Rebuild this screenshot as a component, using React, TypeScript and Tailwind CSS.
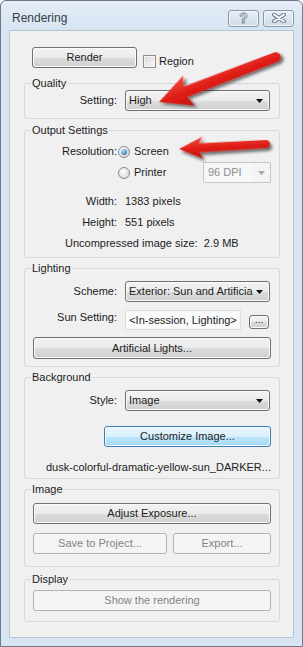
import type { ReactNode } from 'react'

// Win7-ish control faces
const face =
  'bg-[linear-gradient(#f3f3f3_0%,#ebebeb_50%,#dddddd_51%,#cfcfcf_100%)] border border-[#707070] rounded-[3px] shadow-[inset_0_0_0_1px_#fbfbfb]'
const blueFace =
  'bg-[linear-gradient(#eaf6fd_0%,#d9f0fc_50%,#bee6fd_51%,#a7d9f5_100%)] border border-[#3c7fb1] rounded-[3px] shadow-[inset_0_0_0_1px_#f4fbfe]'
const offFace = 'bg-[#f4f4f4] border border-[#adb2b5] rounded-[3px] text-[#838383]'

function Button({ children, className = '', kind = 'normal' }: {
  children: ReactNode; className?: string; kind?: 'normal' | 'blue' | 'off'
}) {
  const look = kind === 'blue' ? blueFace : kind === 'off' ? offFace : face
  return (
    <div className={`flex items-center justify-center h-[21px] ${look} ${className}`}>
      {children}
    </div>
  )
}

function Select({ value, className = '', disabled = false }: { value: string; className?: string; disabled?: boolean }) {
  if (disabled) {
    return (
      <div className={`h-[21px] flex items-center border border-[#c6c6c6] rounded-[2px] bg-[#f4f4f4] text-[#8d8d8d] ${className}`}>
        <span className="flex-1 h-full flex items-center pl-[4px] bg-[#f7f7f7]">{value}</span>
        <span className="w-[17px] flex justify-center">
          <svg width="7" height="4" viewBox="0 0 7 4"><path d="M0 0H7L3.5 4Z" fill="#a7a7a7" /></svg>
        </span>
      </div>
    )
  }
  return (
    <div className={`h-[21px] flex items-center pl-[3px] pr-[6px] ${face} ${className}`}>
      <span className="flex-1 whitespace-nowrap">{value}</span>
      <svg className="ml-[3px] shrink-0" width="7" height="4" viewBox="0 0 7 4"><path d="M0 0H7L3.5 4Z" fill="#111" /></svg>
    </div>
  )
}

function Radio({ checked }: { checked?: boolean }) {
  return (
    <span className="w-[12px] h-[12px] rounded-full border border-[#8b8b8b] bg-[radial-gradient(circle_at_40%_35%,#ffffff,#cfcfcf)] flex items-center justify-center shrink-0">
      {checked && (
        <span className="w-[6px] h-[6px] rounded-full bg-[radial-gradient(circle_at_35%_30%,#a9e4ff,#17588f)]" />
      )}
    </span>
  )
}

function Group({ title, className = '', children }: { title: string; className?: string; children: ReactNode }) {
  return (
    <fieldset className={`border border-[#d5d9dd] rounded-[3px] px-[8px] ${className}`}>
      <legend className="-ml-[2px] px-[1px] leading-[14px]">{title}</legend>
      {children}
    </fieldset>
  )
}

function Label({ children }: { children: ReactNode }) {
  return <span className="w-[84px] shrink-0 text-right">{children}</span>
}

function Arrow({ x, y, angle, len, head, half, shaft }: {
  x: number; y: number; angle: number; len: number; head: number; half: number; shaft: number
}) {
  const d = `M0 0 L${head} ${-half} L${head - 4} ${-shaft} L${len} ${-shaft + 0.5} A${shaft - 0.5} ${shaft - 0.5} 0 0 1 ${len} ${shaft - 0.5} L${head - 4} ${shaft} L${head} ${half} Z`
  return (
    <g transform={`translate(${x} ${y}) rotate(${angle})`} filter="url(#shadow)">
      <path d={d} fill="url(#red)" />
    </g>
  )
}

export default function App() {
  return (
    <div className="relative w-[303px] h-[647px] flex flex-col bg-[#d7e4f2] border border-[#6c7888] rounded-t-[6px] font-['Liberation_Sans',Arial,sans-serif] text-[11px] text-[#1c1c1c]">
      {/* Title bar */}
      <div className="h-[29px] shrink-0 flex items-center pl-[11px] pr-[8px] pt-[5px] bg-[linear-gradient(#e4edf7,#d7e4f2)] rounded-t-[6px]">
        <span className="text-[12px] text-[#363d47]">Rendering</span>
        <div className="ml-auto flex gap-[4px]">
          <div className="w-[31px] h-[17px] rounded-[3px] border border-[#8798ad] bg-[linear-gradient(#e9eff6,#cfdbe8)] shadow-[inset_0_0_0_1px_#f1f5fa] flex items-center justify-center">
            <span className="text-[14px] font-bold leading-none text-white [-webkit-text-stroke:0.8px_#6f7f92]">?</span>
          </div>
          <div className="w-[31px] h-[17px] rounded-[3px] border border-[#8798ad] bg-[linear-gradient(#e9eff6,#cfdbe8)] shadow-[inset_0_0_0_1px_#f1f5fa] flex items-center justify-center">
            <svg width="14" height="10" viewBox="0 0 14 10">
              <path d="M2 1.5L12 8.5M12 1.5L2 8.5" stroke="#6f7f92" strokeWidth="4" strokeLinecap="round" />
              <path d="M2 1.5L12 8.5M12 1.5L2 8.5" stroke="#ffffff" strokeWidth="2" strokeLinecap="round" />
            </svg>
          </div>
        </div>
      </div>

      {/* Client area */}
      <div className="mx-[8px] h-[608px] shrink-0 bg-[#f0f0f0] border border-[#b6c4d4] pl-[14px] pr-[13px] pt-[16px] flex flex-col">
        <div className="flex items-center ml-[8px] h-[21px]">
          <Button className="w-[105px]">Render</Button>
          <div className="ml-[6px] mt-[7px] flex items-center gap-[3px]">
            <span className="w-[13px] h-[13px] border border-[#8f8f8f] bg-[linear-gradient(135deg,#d6d6d6,#fbfbfb)] shadow-[inset_0_0_0_1px_#f4f4f4]" />
            <span>Region</span>
          </div>
        </div>

        <Group title="Quality" className="mt-[8px] pb-[7px]">
          <div className="flex items-center">
            <Label>Setting:</Label>
            <Select value="High" className="ml-[8px] w-[145px]" />
          </div>
        </Group>

        <Group title="Output Settings" className="mt-[4px] pt-[4px] pb-[3px]">
          <div className="flex items-center h-[21px]">
            <Label>Resolution:</Label>
            <span className="ml-[1px]"><Radio checked /></span>
            <span className="ml-[4px]">Screen</span>
          </div>
          <div className="flex items-center h-[21px]">
            <span className="ml-[85px]"><Radio /></span>
            <span className="ml-[4px]">Printer</span>
            <Select value="96 DPI" disabled className="ml-auto w-[68px]" />
          </div>
          <div className="flex items-center h-[21px] mt-[8px]">
            <Label>Width:</Label>
            <span className="ml-[8px]">1383 pixels</span>
          </div>
          <div className="flex items-center h-[21px]">
            <Label>Height:</Label>
            <span className="ml-[8px]">551 pixels</span>
          </div>
          <div className="flex items-center h-[21px] pl-[32px]">
            Uncompressed image size:&nbsp;&nbsp;2.9 MB
          </div>
        </Group>

        <Group title="Lighting" className="mt-[3px] pb-[7px]">
          <div className="flex items-center mt-[6px]">
            <Label>Scheme:</Label>
            <Select value="Exterior: Sun and Artificia" className="ml-[8px] w-[145px]" />
          </div>
          <div className="flex items-center mt-[8px] h-[20px]">
            <span className="w-[84px] shrink-0 text-right -mt-[5px]">Sun Setting:</span>
            <div className="ml-[8px] w-[116px] h-[20px] flex items-center justify-center border border-[#dedede] bg-[#fafafa]">
              &lt;In-session, Lighting&gt;
            </div>
            <div className={`ml-[8px] w-[20px] h-[14px] mt-[3px] flex items-center justify-center leading-none text-[10px] ${face}`}>
              <span className="-mt-[3px]">...</span>
            </div>
          </div>
          <Button className="mt-[7px] w-full h-[22px]">Artificial Lights...</Button>
        </Group>

        <Group title="Background" className="mt-[3px] pb-[4px]">
          <div className="flex items-center mt-[6px]">
            <Label>Style:</Label>
            <Select value="Image" className="ml-[8px] w-[145px]" />
          </div>
          <Button kind="blue" className="mt-[15px] ml-auto w-[167px]">Customize Image...</Button>
          <div className="mt-[13px] h-[14px] leading-[14px] pl-[13px] whitespace-nowrap">
            dusk-colorful-dramatic-yellow-sun_DARKER...
          </div>
        </Group>

        <Group title="Image" className="mt-[3px] pb-[12px]">
          <Button className="mt-[7px] w-full">Adjust Exposure...</Button>
          <div className="flex mt-[9px] gap-[6px]">
            <Button kind="off" className="w-[134px]">Save to Project...</Button>
            <Button kind="off" className="flex-1">Export...</Button>
          </div>
        </Group>

        <Group title="Display" className="mt-[5px] pb-[10px]">
          <Button kind="off" className="mt-[4px] w-full">Show the rendering</Button>
        </Group>
      </div>

      {/* Callout arrows drawn over the dialog */}
      <svg className="absolute inset-0 pointer-events-none" width="303" height="647">
        <defs>
          <linearGradient id="red" x1="0" y1="0" x2="0" y2="1">
            <stop offset="0" stopColor="#f24a3c" />
            <stop offset="0.5" stopColor="#e01f18" />
            <stop offset="1" stopColor="#c4100c" />
          </linearGradient>
          <filter id="shadow" x="-20%" y="-40%" width="140%" height="180%">
            <feDropShadow dx="2" dy="3" stdDeviation="1.6" floodColor="#000" floodOpacity="0.55" />
          </filter>
        </defs>
        <Arrow x={158} y={101} angle={-21} len={125} head={32} half={16} shaft={5.5} />
        <Arrow x={178} y={148} angle={-3.3} len={87} head={24} half={11} shaft={4.5} />
      </svg>
    </div>
  )
}
